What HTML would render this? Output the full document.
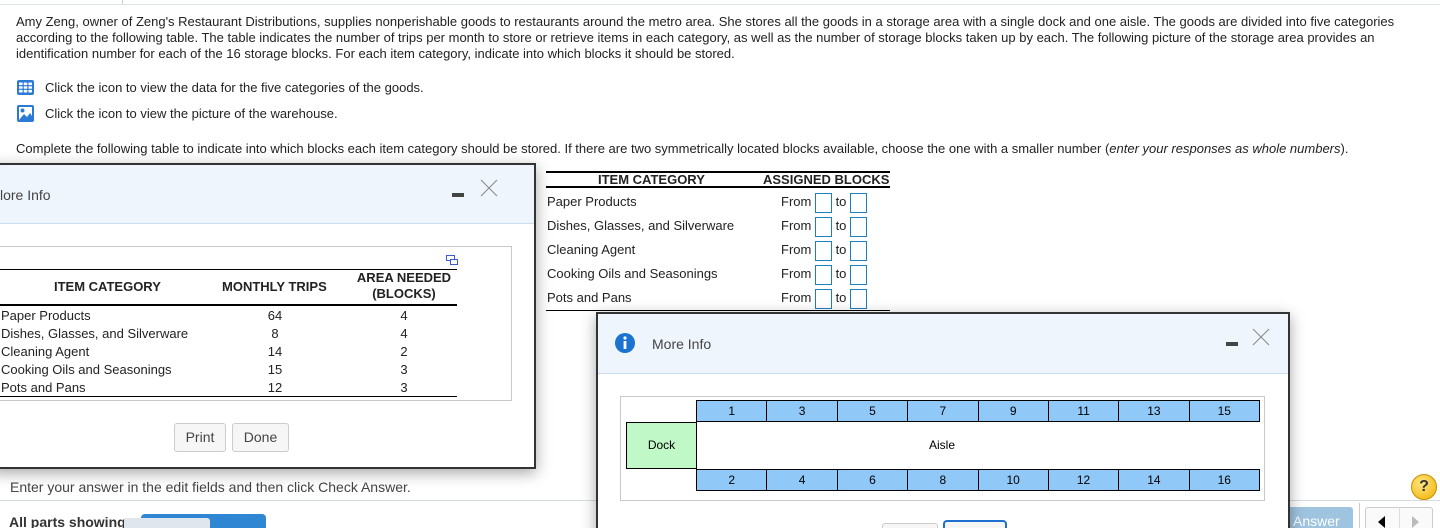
<!DOCTYPE html>
<html><head><meta charset="utf-8"><style>
*{box-sizing:border-box}
html,body{margin:0;width:1440px;height:528px;overflow:hidden}
body{background:#fff;font-family:"Liberation Sans",Arial,sans-serif;font-size:13px;color:#222;position:relative}
.abs{position:absolute}
p{margin:0}
.intro{left:16px;top:14px;width:1410px;line-height:16px}
.box{border:1px solid #1e7fbf;display:inline-block;background:#fff;vertical-align:middle;width:17px;height:20px}
.dlg{position:absolute;background:#fff;border:2px solid #333;box-shadow:0 4px 14px rgba(0,0,0,.35)}
.hdr{position:absolute;left:0;right:0;top:0;background:#eff5fd;border-bottom:1px solid #c9def3}
.btn{position:absolute;border:1px solid #ccc;border-radius:3px;background:#f6f6f6;text-align:center;font-size:14px;color:#444}
td,th{padding:0}
.blk{table-layout:fixed;border-collapse:collapse;background:#90c8f8;text-align:center;font-size:12px;color:#000}
.blk td{border:1px solid #000}
</style></head><body>
<div class="abs" style="left:0;top:4px;width:1440px;height:1px;background:#dde3ea"></div>
<div class="abs" style="left:122px;top:0;width:1px;height:4px;background:#ccc"></div>
<p class="abs intro">Amy Zeng, owner of Zeng's Restaurant Distributions, supplies nonperishable goods to restaurants around the metro area. She stores all the goods in a storage area with a single dock and one aisle. The goods are divided into five categories according to the following table. The table indicates the number of trips per month to store or retrieve items in each category, as well as the number of storage blocks taken up by each. The following picture of the storage area provides an identification number for each of the 16 storage blocks. For each item category, indicate into which blocks it should be stored.</p>
<svg class="abs" style="left:17px;top:80px" width="17" height="15"><rect width="17" height="15" rx="2" fill="#2a7ad6"/><g fill="#fff"><rect x="2" y="2.5" width="3.6" height="2.6" rx=".5"/><rect x="6.7" y="2.5" width="3.6" height="2.6" rx=".5"/><rect x="11.4" y="2.5" width="3.6" height="2.6" rx=".5"/><rect x="2" y="6.2" width="3.6" height="2.6" rx=".5"/><rect x="6.7" y="6.2" width="3.6" height="2.6" rx=".5"/><rect x="11.4" y="6.2" width="3.6" height="2.6" rx=".5"/><rect x="2" y="9.9" width="3.6" height="2.6" rx=".5"/><rect x="6.7" y="9.9" width="3.6" height="2.6" rx=".5"/><rect x="11.4" y="9.9" width="3.6" height="2.6" rx=".5"/></g></svg>
<p class="abs" style="left:45px;top:80px">Click the icon to view the data for the five categories of the goods.</p>
<svg class="abs" style="left:17px;top:105px" width="17" height="17"><rect x="1" y="1" width="15" height="15" rx="1" fill="#fff" stroke="#2a7ad6" stroke-width="2"/><circle cx="5.5" cy="5.5" r="2" fill="#2a7ad6"/><path d="M2 15 L7 9 L10 12 L13 8 L15 11 L15 15Z" fill="#2a7ad6"/></svg>
<p class="abs" style="left:45px;top:106px">Click the icon to view the picture of the warehouse.</p>
<p class="abs" style="left:16px;top:141px">Complete the following table to indicate into which blocks each item category should be stored. If there are two symmetrically located blocks available, choose the one with a smaller number (<i>enter your responses as whole numbers</i>).</p>

<!-- assigned table -->
<div class="abs" style="left:546px;top:171px;width:344px;height:2px;background:#000"></div>
<div class="abs" style="left:546px;top:186px;width:344px;height:2px;background:#000"></div>
<div class="abs" style="left:546px;top:310px;width:344px;height:1px;background:#000"></div>
<b class="abs" style="left:598px;top:172px">ITEM CATEGORY</b>
<b class="abs" style="left:763px;top:172px">ASSIGNED BLOCKS</b>
<div class="abs" style="left:547px;top:190px;line-height:24px">Paper Products<br>Dishes, Glasses, and Silverware<br>Cleaning Agent<br>Cooking Oils and Seasonings<br>Pots and Pans</div>
<div class="abs" style="left:781px;top:190px;line-height:24px">
<div style="height:24px">From <span class="box"></span> to <span class="box"></span></div>
<div style="height:24px">From <span class="box"></span> to <span class="box"></span></div>
<div style="height:24px">From <span class="box"></span> to <span class="box"></span></div>
<div style="height:24px">From <span class="box"></span> to <span class="box"></span></div>
<div style="height:24px">From <span class="box"></span> to <span class="box"></span></div>
</div>

<!-- bottom area -->
<p class="abs" style="left:10px;top:479px;font-size:14px;color:#444">Enter your answer in the edit fields and then click Check Answer.</p>
<div class="abs" style="left:0;top:500px;width:1440px;height:1px;background:#d5dbe2"></div>
<b class="abs" style="left:9px;top:514px;font-size:14px;color:#333">All parts showing</b>
<div class="abs" style="left:141px;top:514px;width:125px;height:20px;background:#2f86d2;border-radius:4px"></div>
<div class="abs" style="left:124px;top:518px;width:86px;height:14px;background:#dfe6ee;border-radius:3px"></div>
<div class="abs" style="left:1411px;top:474px;width:26px;height:26px;border-radius:50%;background:radial-gradient(circle at 40% 35%,#ffe680,#f0b000);border:1px solid #c89000;text-align:center;font-weight:bold;font-size:16px;line-height:24px;color:#333">?</div>
<div class="abs" style="left:1287px;top:507px;width:66px;height:24px;background:#9fc4e0;border-radius:3px;color:#fff;font-size:14px;padding:6px 0 0 6px">Answer</div>
<div class="abs" style="left:1359px;top:503px;width:1px;height:25px;background:#ccc"></div>
<div class="abs" style="left:1365px;top:507px;width:68px;height:24px;border:1px solid #ccc;border-radius:3px;background:#fafafa"></div>
<div class="abs" style="left:1399px;top:507px;width:1px;height:24px;background:#ddd"></div>
<div class="abs" style="left:1378px;top:516px;width:0;height:0;border-top:6px solid transparent;border-bottom:6px solid transparent;border-right:7px solid #000"></div>
<div class="abs" style="left:1412px;top:516px;width:0;height:0;border-top:6px solid transparent;border-bottom:6px solid transparent;border-left:7px solid #bbb"></div>

<!-- left dialog -->
<div class="dlg" style="left:-10px;top:163px;width:546px;height:306px">
 <div class="hdr" style="height:59px"></div>
 <div class="abs" style="left:8px;top:22px;font-size:14px;color:#444">lore Info</div>
 <div class="abs" style="left:460px;top:28px;width:12px;height:4px;background:#444"></div>
 <svg class="abs" style="left:488px;top:14px" width="18" height="18"><path d="M1 1L17 17M17 1L1 17" stroke="#888" stroke-width="1"/></svg>
 <div class="abs" style="left:0;top:81px;width:520px;height:155px;border:1px solid #c8c8c8;border-left:none"></div>
 <svg class="abs" style="left:454px;top:90px" width="12" height="10"><rect x=".5" y=".5" width="8" height="5" fill="none" stroke="#3a5bd0"/><rect x="4.5" y="4.5" width="7" height="5" fill="#fff" stroke="#3a5bd0"/></svg>
 <div class="abs" style="left:0;top:104px;width:465px;height:1px;background:#000"></div>
 <div class="abs" style="left:0;top:139px;width:465px;height:2px;background:#000"></div>
 <div class="abs" style="left:0;top:231px;width:465px;height:1px;background:#000"></div>
 <b class="abs" style="left:62px;top:114px">ITEM CATEGORY</b>
 <b class="abs" style="left:230px;top:114px">MONTHLY TRIPS</b>
 <b class="abs" style="left:352px;top:106px;width:120px;text-align:center;line-height:16px;top:105px">AREA NEEDED<br>(BLOCKS)</b>
 <div class="abs" style="left:9px;top:142px;line-height:18px">Paper Products<br>Dishes, Glasses, and Silverware<br>Cleaning Agent<br>Cooking Oils and Seasonings<br>Pots and Pans</div>
 <div class="abs" style="left:263px;top:142px;width:40px;text-align:center;line-height:18px">64<br>8<br>14<br>15<br>12</div>
 <div class="abs" style="left:392px;top:142px;width:40px;text-align:center;line-height:18px">4<br>4<br>2<br>3<br>3</div>
 <div class="btn" style="left:182px;top:258px;width:52px;height:29px;line-height:27px">Print</div>
 <div class="btn" style="left:240px;top:258px;width:57px;height:29px;line-height:27px">Done</div>
</div>

<!-- right dialog -->
<div class="dlg" style="left:596px;top:312px;width:694px;height:230px">
 <div class="hdr" style="height:60px"></div>
 <svg class="abs" style="left:17px;top:19px" width="20" height="20"><circle cx="10" cy="10" r="10" fill="#1a73d0"/><rect x="8.6" y="8" width="2.8" height="8" fill="#fff"/><circle cx="10" cy="5" r="1.6" fill="#fff"/></svg>
 <div class="abs" style="left:54px;top:22px;font-size:14px;color:#444">More Info</div>
 <div class="abs" style="left:628px;top:28px;width:12px;height:4px;background:#444"></div>
 <svg class="abs" style="left:654px;top:14px" width="18" height="18"><path d="M1 1L17 17M17 1L1 17" stroke="#888" stroke-width="1"/></svg>
 <div class="abs" style="left:22px;top:82px;width:645px;height:105px;border:1px solid #c8c8c8"></div>
 <table class="abs blk" style="left:98px;top:86px;width:564px;height:22px"><tr><td>1</td><td>3</td><td>5</td><td>7</td><td>9</td><td>11</td><td>13</td><td>15</td></tr></table>
 <div class="abs" style="left:28px;top:108px;width:71px;height:47px;background:#c0f8c8;border:1px solid #000;text-align:center;line-height:45px;font-size:12px;color:#000">Dock</div>
 <div class="abs" style="left:331px;top:124px;font-size:12px;color:#000">Aisle</div>
 <table class="abs blk" style="left:98px;top:155px;width:564px;height:22px"><tr><td>2</td><td>4</td><td>6</td><td>8</td><td>10</td><td>12</td><td>14</td><td>16</td></tr></table>
 <div class="abs" style="left:284px;top:209px;width:56px;height:20px;border:1px solid #ccc;border-radius:3px;background:#f6f6f6"></div>
 <div class="abs" style="left:345px;top:206px;width:64px;height:24px;border:2px solid #1e6fd0;border-radius:4px;background:#f6f6f6"></div>
</div>
</body></html>
